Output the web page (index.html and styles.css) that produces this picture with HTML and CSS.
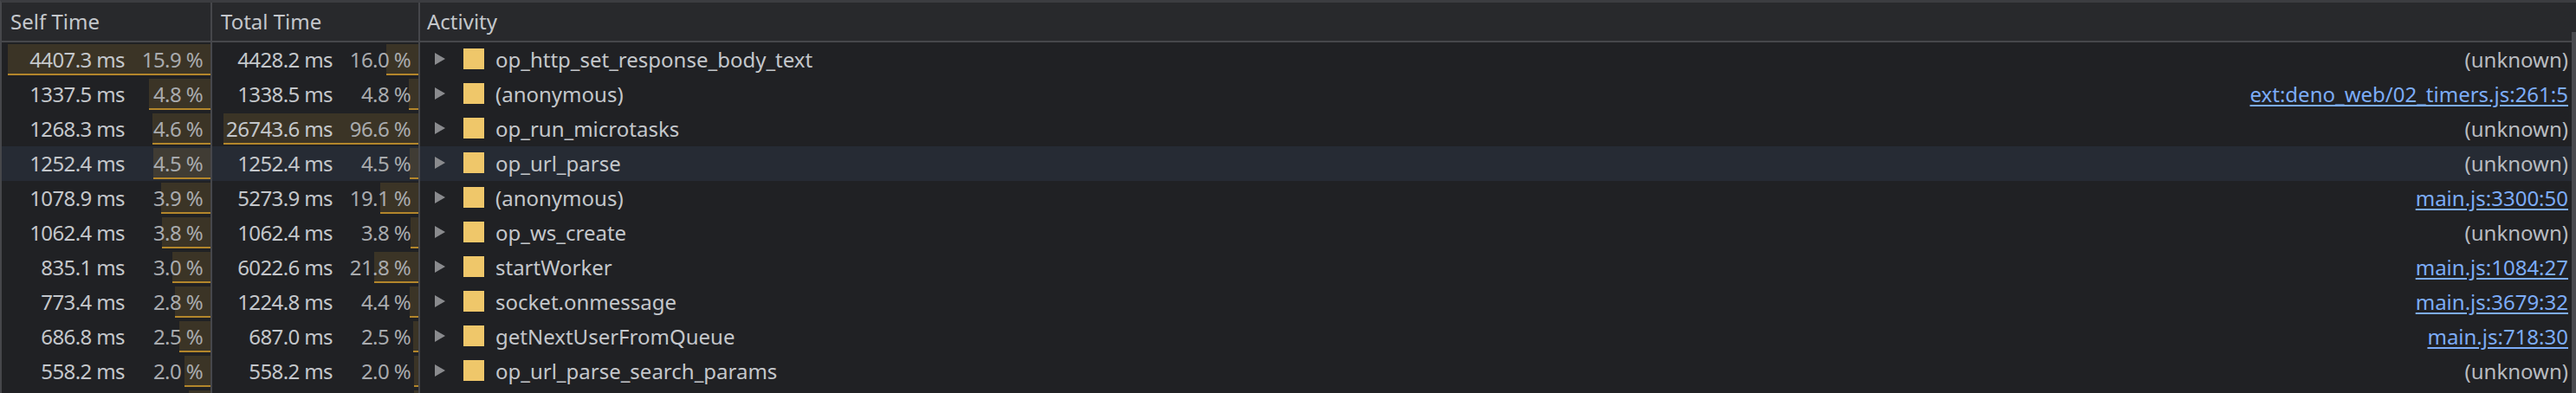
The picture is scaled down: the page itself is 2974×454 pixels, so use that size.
FILE: index.html
```html
<!DOCTYPE html>
<html>
<head>
<meta charset="utf-8">
<link rel="stylesheet" href="styles.css">
</head>
<body>
<div class="grid">
  <div class="head">
    <div class="hcell">Self Time</div>
    <div class="hcell">Total Time</div>
    <div class="hcell act-h">Activity</div>
  </div>
  <div class="rows">
    <div class="row">
      <div class="cell num"><div class="bar" style="width:234px"></div><span class="ms">4407.3 ms</span><span class="pct">15.9 %</span></div>
      <div class="cell num"><div class="bar" style="width:37px"></div><span class="ms">4428.2 ms</span><span class="pct">16.0 %</span></div>
      <div class="cell act"><span class="tri"></span><span class="sq"></span><span class="name">op_http_set_response_body_text</span><span class="src">(unknown)</span></div>
    </div>
    <div class="row">
      <div class="cell num"><div class="bar" style="width:71px"></div><span class="ms">1337.5 ms</span><span class="pct">4.8 %</span></div>
      <div class="cell num"><div class="bar" style="width:11px"></div><span class="ms">1338.5 ms</span><span class="pct">4.8 %</span></div>
      <div class="cell act"><span class="tri"></span><span class="sq"></span><span class="name">(anonymous)</span><a class="src link">ext:deno_web/02_timers.js:261:5</a></div>
    </div>
    <div class="row">
      <div class="cell num"><div class="bar" style="width:67px"></div><span class="ms">1268.3 ms</span><span class="pct">4.6 %</span></div>
      <div class="cell num"><div class="bar" style="width:225px"></div><span class="ms">26743.6 ms</span><span class="pct">96.6 %</span></div>
      <div class="cell act"><span class="tri"></span><span class="sq"></span><span class="name">op_run_microtasks</span><span class="src">(unknown)</span></div>
    </div>
    <div class="row sel">
      <div class="cell num"><div class="bar" style="width:66px"></div><span class="ms">1252.4 ms</span><span class="pct">4.5 %</span></div>
      <div class="cell num"><div class="bar" style="width:10px"></div><span class="ms">1252.4 ms</span><span class="pct">4.5 %</span></div>
      <div class="cell act"><span class="tri"></span><span class="sq"></span><span class="name">op_url_parse</span><span class="src">(unknown)</span></div>
    </div>
    <div class="row">
      <div class="cell num"><div class="bar" style="width:57px"></div><span class="ms">1078.9 ms</span><span class="pct">3.9 %</span></div>
      <div class="cell num"><div class="bar" style="width:44px"></div><span class="ms">5273.9 ms</span><span class="pct">19.1 %</span></div>
      <div class="cell act"><span class="tri"></span><span class="sq"></span><span class="name">(anonymous)</span><a class="src link">main.js:3300:50</a></div>
    </div>
    <div class="row">
      <div class="cell num"><div class="bar" style="width:56px"></div><span class="ms">1062.4 ms</span><span class="pct">3.8 %</span></div>
      <div class="cell num"><div class="bar" style="width:9px"></div><span class="ms">1062.4 ms</span><span class="pct">3.8 %</span></div>
      <div class="cell act"><span class="tri"></span><span class="sq"></span><span class="name">op_ws_create</span><span class="src">(unknown)</span></div>
    </div>
    <div class="row">
      <div class="cell num"><div class="bar" style="width:44px"></div><span class="ms">835.1 ms</span><span class="pct">3.0 %</span></div>
      <div class="cell num"><div class="bar" style="width:51px"></div><span class="ms">6022.6 ms</span><span class="pct">21.8 %</span></div>
      <div class="cell act"><span class="tri"></span><span class="sq"></span><span class="name">startWorker</span><a class="src link">main.js:1084:27</a></div>
    </div>
    <div class="row">
      <div class="cell num"><div class="bar" style="width:41px"></div><span class="ms">773.4 ms</span><span class="pct">2.8 %</span></div>
      <div class="cell num"><div class="bar" style="width:10px"></div><span class="ms">1224.8 ms</span><span class="pct">4.4 %</span></div>
      <div class="cell act"><span class="tri"></span><span class="sq"></span><span class="name">socket.onmessage</span><a class="src link">main.js:3679:32</a></div>
    </div>
    <div class="row">
      <div class="cell num"><div class="bar" style="width:36px"></div><span class="ms">686.8 ms</span><span class="pct">2.5 %</span></div>
      <div class="cell num"><div class="bar" style="width:6px"></div><span class="ms">687.0 ms</span><span class="pct">2.5 %</span></div>
      <div class="cell act"><span class="tri"></span><span class="sq"></span><span class="name">getNextUserFromQueue</span><a class="src link">main.js:718:30</a></div>
    </div>
    <div class="row">
      <div class="cell num"><div class="bar" style="width:30px"></div><span class="ms">558.2 ms</span><span class="pct">2.0 %</span></div>
      <div class="cell num"><div class="bar" style="width:5px"></div><span class="ms">558.2 ms</span><span class="pct">2.0 %</span></div>
      <div class="cell act"><span class="tri"></span><span class="sq"></span><span class="name">op_url_parse_search_params</span><span class="src">(unknown)</span></div>
    </div>
    <div class="row">
      <div class="cell num"><div class="bar" style="width:25px"></div></div>
      <div class="cell num"><div class="bar" style="width:5px"></div></div>
      <div class="cell act"></div>
    </div>
  </div>
  <div class="scrollbar"></div>
</div>
</body>
</html>
```

FILE: styles.css
```css
* { box-sizing: border-box; }
html, body {
  margin: 0;
  padding: 0;
  background: #202124;
  width: 2974px;
  height: 454px;
  overflow: hidden;
}
body {
  font-family: "Noto Sans", "Open Sans", sans-serif;
  font-size: 24px;
  color: #c4c7cb;
}
.grid {
  position: relative;
  height: 454px;
  overflow: hidden;
  border-left: 2px solid #46474b;
  border-top: 3px solid #3b3c40;
}
.head {
  display: grid;
  grid-template-columns: 243px 240px 1fr;
  height: 46px;
  background: #28292c;
  border-bottom: 2px solid #46474b;
}
.hcell {
  display: flex;
  align-items: center;
  padding-left: 10px;
  border-right: 2px solid #46474b;
  color: #c4c7cb;
  padding-bottom: 2px;
}
.act-h { border-right: none; padding-left: 8px; }
.row {
  display: grid;
  grid-template-columns: 243px 240px 1fr;
  height: 40px;
}
.row.sel { background: #262b34; }
.cell {
  position: relative;
  height: 40px;
  display: flex;
  align-items: center;
  padding-bottom: 2px;
}
.num {
  justify-content: flex-end;
  border-right: 2px solid #46474b;
  padding-right: 9px;
  letter-spacing: -0.6px;
}
.bar {
  position: absolute;
  right: 0;
  top: 2px;
  height: 36px;
  background: rgba(255, 190, 60, 0.12);
  border-bottom: 2px solid #b3862b;
}
.ms, .pct { position: relative; white-space: nowrap; }
.pct {
  width: 90px;
  text-align: right;
  color: #a9abae;
}
.act {
  padding-left: 17px;
  padding-right: 9px;
}
.tri {
  width: 0;
  height: 0;
  border-top: 7px solid transparent;
  border-bottom: 7px solid transparent;
  border-left: 12px solid #8a8b8e;
  margin-right: 21px;
}
.sq {
  width: 24px;
  height: 24px;
  background: #efc76a;
  margin-right: 13px;
}
.name { flex: 1; white-space: nowrap; }
.src { color: #b9bcc0; white-space: nowrap; }
.link {
  color: #7cacf8;
  text-decoration: underline;
  text-underline-offset: 3px;
}
.scrollbar {
  position: absolute;
  right: 0;
  top: 34px;
  width: 5px;
  bottom: 0;
  background: #4a4b4f;
}
```
